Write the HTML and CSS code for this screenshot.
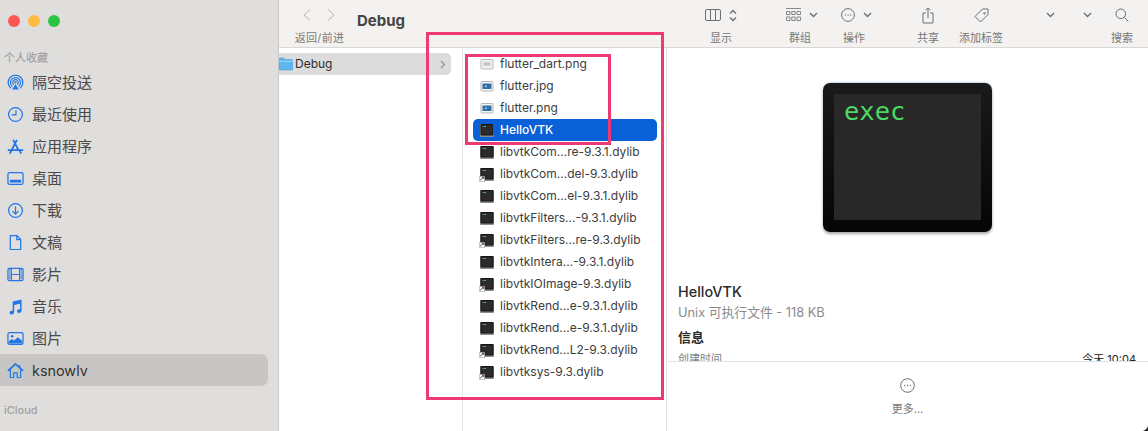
FILE: index.html
```html
<!DOCTYPE html>
<html lang="zh-CN">
<head>
<meta charset="utf-8">
<title>Debug</title>
<link rel="stylesheet" href="styles.css">
</head>
<body>
<svg class="defs" width="0" height="0" aria-hidden="true">
  <symbol id="term" viewBox="0 0 14 13">
    <rect x="0" y="0" width="14" height="13" rx="1" fill="#8d8d8d"/>
    <rect x="0.5" y="0" width="13" height="11.5" rx="1" fill="#161616"/>
    <rect x="1.5" y="1" width="11" height="9.5" fill="#2b2b2b"/>
    <path d="M2.5 2.5h3.5" stroke="#5fd47a" stroke-width="0.9" stroke-dasharray="1 .3"/>
  </symbol>
  <symbol id="alias" viewBox="0 0 6 6">
    <rect x="0.3" y="0.3" width="5.4" height="5.4" rx="0.8" fill="#fff" stroke="#777" stroke-width=".5"/>
    <path d="M1.7 4.4 C1.7 3 2.6 2.2 4.3 2.2M3 1.2h1.5v1.5" fill="none" stroke="#222" stroke-width=".8"/>
  </symbol>
</svg>
<div class="window">
  <aside class="sidebar">
    <div class="lights"><span class="light red"></span><span class="light yellow"></span><span class="light green"></span></div>
    <div class="sec-title">个人收藏</div>
    <div class="side-row"><svg class="si" viewBox="0 0 18 18"><path d="M4.300 15.200A7.800 7.800 0 1 1 13.700 15.200"/><path d="M5.700 13.200A5.300 5.300 0 1 1 12.300 13.200"/><path d="M7.200 11.200A2.900 2.900 0 1 1 10.800 11.200"/><circle class="fill" cx="9" cy="8.800" r="1.200"/><path class="fill" d="M9 10.500l3.500 6h-7z"/></svg><span>隔空投送</span></div>
    <div class="side-row"><svg class="si" viewBox="0 0 18 18"><circle cx="9" cy="9" r="7.300"/><path d="M9.500 4.500v5H5"/></svg><span>最近使用</span></div>
    <div class="side-row"><svg class="si" viewBox="0 0 18 18"><path class="thick" d="M6.500 2l6 11.500M10.500 2L4.500 13.500M.8 12.800h16.400M3 16.500l1.500-3M15 16.500l-1.500-3"/></svg><span>应用程序</span></div>
    <div class="side-row"><svg class="si" viewBox="0 0 18 18"><rect x="1" y="2.800" width="16" height="12.400" rx="1.600"/><rect class="fill" x="3" y="10.300" width="12" height="3" rx=".4"/></svg><span>桌面</span></div>
    <div class="side-row"><svg class="si" viewBox="0 0 18 18"><circle cx="9" cy="9" r="7.300"/><path d="M9 4.800v8M5.800 9.600L9 12.800l3.200-3.200"/></svg><span>下载</span></div>
    <div class="side-row"><svg class="si" viewBox="0 0 18 18"><path d="M3.500 1.600h7l4 4.200v10.600h-11zM10.300 1.800v4.200h4.200"/></svg><span>文稿</span></div>
    <div class="side-row"><svg class="si" viewBox="0 0 18 18"><rect x="1" y="2.600" width="16" height="12.800" rx="1.400"/><path d="M4.600 2.600v12.800M13.400 2.600v12.800M4.600 9h8.800"/><path class="dash" d="M2.800 3.500v11M15.200 3.500v11"/></svg><span>影片</span></div>
    <div class="side-row"><svg class="si" viewBox="0 0 18 18"><path class="fill" d="M6 3.600L15.400 1.600v11.600c0 1.600-1.300 2.600-2.800 2.600-1.200 0-2-.7-2-1.700 0-1.200 1-2 2.300-2.100l.9-.1V6.200L7.600 7.400v7.500c0 1.500-1.300 2.500-2.800 2.500-1.200 0-2-.7-2-1.700 0-1.200 1-2 2.300-2.100L6 13.400z"/></svg><span>音乐</span></div>
    <div class="side-row"><svg class="si" viewBox="0 0 18 18"><rect x="1" y="2.800" width="16" height="12.400" rx="1.600"/><circle class="fill" cx="5.400" cy="6.600" r="1.400"/><path class="fill" d="M2 14.200v-2.400l3-2.200 2.600 1.600 3.800-3.600 4.600 3.800v2.800z"/></svg><span>图片</span></div>
    <div class="side-row active"><svg class="si" viewBox="0 0 18 18"><path class="thick" d="M1 9.400L9 2l8 7.400"/><path d="M3.600 7.400v9h3.600v-5h3.600v5h3.600v-9M13.400 3.200v2.400"/></svg><span class="latin">ksnowlv</span></div>
    <div class="sec-title cloud">iCloud</div>
  </aside>
  <main class="main">
    <header class="toolbar">
      <div class="nav">
        <div class="nav-arrows">
          <svg class="ti" width="12" height="14" viewBox="0 0 12 14"><path class="faint" d="M9 1.500L3 7l6 5.500"/></svg>
          <svg class="ti" width="12" height="14" viewBox="0 0 12 14"><path class="faint" d="M3 1.500L9 7l-6 5.500"/></svg>
        </div>
        <span class="label wide">返回/前进</span>
      </div>
      <div class="title">Debug</div>
      <div class="tools">
        <div class="tool t-view">
          <div class="tool-icon">
            <svg class="ti" width="16" height="12" viewBox="0 0 16 12"><rect x=".5" y=".5" width="15" height="11" rx="1.500"/><path d="M5.500.5v11M10.500.5v11"/></svg>
            <svg class="ti chev-ud" width="8" height="13" viewBox="0 0 8 13"><path class="bold" d="M1 4.500L4 1.500l3 3M1 8.500l3 3 3-3"/></svg>
          </div>
          <span class="label">显示</span>
        </div>
        <div class="tool t-group">
          <div class="tool-icon shifted">
            <svg class="ti" width="15" height="14" viewBox="0 0 15 14"><path d="M0 .5h15M.5 3.500h3.500v3h-3.500zM5.800 3.500h3.400v3h-3.400zM11 3.500h3.500v3h-3.500zM.5 9h3.500v3.500h-3.500zM5.800 9h3.400v3.500h-3.400zM11 9h3.500v3.500h-3.500z" stroke-width=".8"/></svg>
            <svg class="ti chev" width="9" height="6" viewBox="0 0 9 6"><path class="bold" d="M1 1l3.500 3.500L8 1"/></svg>
          </div>
          <span class="label">群组</span>
        </div>
        <div class="tool t-action">
          <div class="tool-icon shifted">
            <svg class="ti" width="14" height="14" viewBox="0 0 14 14"><circle cx="7" cy="7" r="6.400"/><path class="bold dots" d="M3.800 7h.9M6.600 7h.9M9.300 7h.9"/></svg>
            <svg class="ti chev" width="9" height="6" viewBox="0 0 9 6"><path class="bold" d="M1 1l3.500 3.500L8 1"/></svg>
          </div>
          <span class="label">操作</span>
        </div>
        <div class="tool t-share">
          <div class="tool-icon">
            <svg class="ti" width="12" height="17" viewBox="0 0 12 17"><path d="M3.800 6H1v10h10V6H8.200M6 11V1M3.500 3.300L6 .9l2.500 2.400"/></svg>
          </div>
          <span class="label">共享</span>
        </div>
        <div class="tool t-tag">
          <div class="tool-icon">
            <svg class="ti" width="15" height="15" viewBox="0 0 15 15"><path d="M8.500 1h5.500v5.500L6.500 14 1 8.500zM10.500 4.500a.8.8 0 1 0 .01 0"/></svg>
          </div>
          <span class="label">添加标签</span>
        </div>
        <div class="tool t-more">
          <div class="tool-icon"><svg class="ti chev" width="9" height="6" viewBox="0 0 9 6"><path class="bold" d="M1 1l3.500 3.500L8 1"/></svg></div>
        </div>
        <div class="tool t-more2">
          <div class="tool-icon"><svg class="ti chev" width="9" height="6" viewBox="0 0 9 6"><path class="bold" d="M1 1l3.500 3.500L8 1"/></svg></div>
        </div>
        <div class="tool t-search">
          <div class="tool-icon">
            <svg class="ti" width="14" height="14" viewBox="0 0 14 14"><circle cx="5.800" cy="5.800" r="4.800"/><path d="M9.300 9.300l4 4"/></svg>
          </div>
          <span class="label">搜索</span>
        </div>
      </div>
    </header>
    <div class="content">
      <section class="col col-folder">
        <div class="folder-row">
          <svg class="folder" width="14" height="14" viewBox="0 0 14 14"><path d="M0 2.500C0 1.600.6 1 1.500 1h3.300l1.400 1.500h6.300c.9 0 1.500.6 1.500 1.500v7.500c0 .9-.6 1.500-1.500 1.500h-11C.6 13 0 12.400 0 11.500z" fill="#5eb6ee" stroke="#3c95d6" stroke-width=".5"/><path d="M0 4.400h14" stroke="#a8dcfa" stroke-width=".8"/></svg>
          <span class="folder-name">Debug</span>
          <svg class="row-chev" width="6" height="9" viewBox="0 0 6 9"><path d="M1 1l3.500 3.500L1 8" fill="none" stroke="#8f8f8f" stroke-width="1.200"/></svg>
        </div>
      </section>
      <section class="col col-files">
        <div class="file"><svg class="fi" viewBox="0 0 14 11"><rect x="1" y=".5" width="12" height="9.500" rx="1" fill="#f6f6f6" stroke="#b5b5b5"/><rect x="3" y="2.500" width="8" height="5" fill="#d6d8db"/><rect x="4.500" y="4.500" width="5" height="1" fill="#a5a9ad"/></svg><span>flutter_dart.png</span></div>
        <div class="file"><svg class="fi" viewBox="0 0 14 11"><rect x="1" y=".5" width="12" height="9.500" rx="1" fill="#f6f6f6" stroke="#b5b5b5"/><rect x="2.500" y="2.500" width="9" height="5.500" fill="#2f6ea8"/><path d="M4.500 5.200L6.500 4v2.500z" fill="#cfe6f7"/></svg><span>flutter.jpg</span></div>
        <div class="file"><svg class="fi" viewBox="0 0 14 11"><rect x="1" y=".5" width="12" height="9.500" rx="1" fill="#f6f6f6" stroke="#b5b5b5"/><rect x="2.500" y="2.500" width="9" height="5.500" fill="#2f6ea8"/><path d="M4.500 5.200L6.500 4v2.500z" fill="#cfe6f7"/></svg><span>flutter.png</span></div>
        <div class="file selected"><svg class="ft"><use href="#term"/></svg><span>HelloVTK</span></div>
        <div class="file"><svg class="ft"><use href="#term"/></svg><span>libvtkCom...re-9.3.1.dylib</span></div>
        <div class="file"><span class="fw"><svg class="ft"><use href="#term"/></svg><svg class="al"><use href="#alias"/></svg></span><span>libvtkCom...del-9.3.dylib</span></div>
        <div class="file"><svg class="ft"><use href="#term"/></svg><span>libvtkCom...el-9.3.1.dylib</span></div>
        <div class="file"><svg class="ft"><use href="#term"/></svg><span>libvtkFilters...-9.3.1.dylib</span></div>
        <div class="file"><span class="fw"><svg class="ft"><use href="#term"/></svg><svg class="al"><use href="#alias"/></svg></span><span>libvtkFilters...re-9.3.dylib</span></div>
        <div class="file"><svg class="ft"><use href="#term"/></svg><span>libvtkIntera...-9.3.1.dylib</span></div>
        <div class="file"><span class="fw"><svg class="ft"><use href="#term"/></svg><svg class="al"><use href="#alias"/></svg></span><span>libvtkIOImage-9.3.dylib</span></div>
        <div class="file"><svg class="ft"><use href="#term"/></svg><span>libvtkRend...e-9.3.1.dylib</span></div>
        <div class="file"><svg class="ft"><use href="#term"/></svg><span>libvtkRend...e-9.3.1.dylib</span></div>
        <div class="file"><span class="fw"><svg class="ft"><use href="#term"/></svg><svg class="al"><use href="#alias"/></svg></span><span>libvtkRend...L2-9.3.dylib</span></div>
        <div class="file"><span class="fw"><svg class="ft"><use href="#term"/></svg><svg class="al"><use href="#alias"/></svg></span><span>libvtksys-9.3.dylib</span></div>
      </section>
      <section class="preview">
        <div class="preview-body">
          <div class="big-icon"><div class="screen"><span class="exec">exec</span></div></div>
          <h1 class="p-name">HelloVTK</h1>
          <div class="p-kind">Unix 可执行文件 - 118 KB</div>
          <h2 class="p-info">信息</h2>
          <div class="p-row"><span class="p-key">创建时间</span><span class="p-val">今天 10:04</span></div>
        </div>
        <div class="preview-more">
          <svg class="ti" width="15" height="15" viewBox="0 0 15 15"><circle cx="7.500" cy="7.500" r="6.800"/><path class="bold dots" d="M4.200 7.500h1M7 7.500h1M9.800 7.500h1"/></svg>
          <span class="label">更多...</span>
        </div>
      </section>
    </div>
  </main>
  <div class="mark mark-outer"></div>
  <div class="mark mark-inner"></div>
</div>
</body>
</html>
```

FILE: styles.css
```css
* { box-sizing: border-box; }
html, body { margin: 0; padding: 0; height: 100%; background: #2a2a2a; }
body { font-family: Inter, "Liberation Sans", "Noto Sans CJK SC", sans-serif; overflow: hidden; }
.defs { position: absolute; }
.window { position: relative; display: flex; width: 1148px; height: 431px; overflow: hidden; background: #fff; border-bottom-right-radius: 7px; }

/* sidebar */
.sidebar { width: 279px; flex: none; background: #e0dedd; border-right: 1px solid #c9c8c7; display: flex; flex-direction: column; padding-right: 10px; }
.lights { display: flex; gap: 8px; padding: 15px 0 0 8px; height: 50px; flex: none; }
.light { width: 12px; height: 12px; border-radius: 50%; }
.red { background: #fc5753; }
.yellow { background: #fdbc40; }
.green { background: #2bc641; }
.sec-title { font-size: 11px; line-height: 16px; color: #a3a1a0; padding-left: 4px; font-weight: 500; }
.cloud { margin-top: 16px; }
.side-row { display: flex; align-items: center; height: 32px; padding-left: 7px; font-size: 15px; color: #4a4a4a; border-radius: 0 7px 7px 0; flex: none; }
.side-row span { margin-left: 8px; padding-bottom: 2px; }
.side-row span.latin { font-size: 14.400px; padding-bottom: 0; }
.side-row.active { background: #c8c6c5; color: #333; }
.si { width: 17px; height: 17px; flex: none; fill: none; stroke: #2277e4; stroke-width: 1.300; }
.si .fill { fill: #2277e4; stroke: none; }
.si .thick { stroke-width: 1.900; }
.si .dash { stroke-width: 1.400; stroke-dasharray: 1.200 1; }

/* main */
.main { flex: 1; min-width: 0; display: flex; flex-direction: column; }
.toolbar { height: 48px; flex: none; display: flex; background: #f4f2f1; border-bottom: 1px solid #d9d8d7; padding-left: 15px; }
.nav { width: 51px; display: flex; flex-direction: column; align-items: center; }
.nav-arrows { display: flex; gap: 12px; height: 30px; padding-top: 8px; margin-right: 1px; }
.title { margin-left: 12px; font-size: 15px; font-weight: 700; color: #444; line-height: 42px; }
.label { font-size: 11px; line-height: 14px; color: #777; white-space: nowrap; margin-top: 1px; }
.label.wide { letter-spacing: .35px; }
.tools { margin-left: auto; display: flex; padding-right: 6px; }
.tool { display: flex; flex-direction: column; align-items: center; }
.tool-icon { height: 30px; display: flex; align-items: center; gap: 8px; }
.tool-icon.shifted { padding-left: 4px; }
.ti { fill: none; stroke: #6f6f6f; stroke-width: 1; flex: none; }
.ti .faint { stroke: #b8b7b6; }
.ti .bold { stroke-width: 1.400; }
.t-view { width: 60px; }
.t-group { width: 50px; margin-left: 24px; }
.t-action { width: 50px; margin-left: 4px; }
.t-share { width: 50px; margin-left: 24px; }
.t-tag { width: 56px; }
.t-more { width: 30px; margin-left: 26px; }
.t-more2 { width: 30px; margin-left: 7px; }
.t-search { width: 40px; }

/* columns */
.content { flex: 1; display: flex; min-height: 0; }
.col { flex: none; background: #fff; border-right: 1px solid #e4e4e4; padding-top: 5px; }
.col-folder { width: 184px; }
.folder-row { display: flex; align-items: center; height: 22px; width: 172px; background: #dcdcdc; border-radius: 0 5px 5px 0; }
.folder { flex: none; }
.folder-name { margin-left: 2px; font-size: 12px; color: #2e2e2e; padding-bottom: 2px; }
.row-chev { margin-left: auto; margin-right: 5px; }
.col-files { width: 204px; padding-left: 10px; padding-right: 9px; }
.file { display: flex; align-items: center; height: 22px; padding-left: 7px; font-size: 12px; color: #3c3c3c; border-radius: 5px; }
.file span:last-child { margin-left: 6px; padding-bottom: 2px; }
.file.selected { background: #0a60d6; color: #fff; font-weight: 500; }
.fi { width: 14px; height: 11px; flex: none; }
.ft { width: 14px; height: 13px; flex: none; display: block; }
.fw { position: relative; flex: none; width: 14px; height: 13px; }
.al { position: absolute; left: -1px; bottom: -1px; width: 6px; height: 6px; }

/* preview */
.preview { flex: 1; min-width: 0; display: flex; flex-direction: column; background: #fff; }
.preview-body { height: 314px; flex: none; overflow: hidden; padding: 35px 12px 0 11px; border-bottom: 1px solid #e4e4e4; }
.big-icon { width: 169px; height: 149px; margin-left: 145px; background: linear-gradient(#1a1a1a, #050505); border-radius: 7px; padding: 11px; box-shadow: 0 2px 3px rgba(0,0,0,.35), 0 -1px 1px rgba(120,170,210,.4); }
.screen { width: 147px; height: 126px; background: #282828; padding: 1px 10px; }
.exec { font-family: "DejaVu Sans Mono", monospace; font-size: 25.500px; line-height: 32px; color: #4fd765; }
.p-name { margin: 50px 0 0; font-size: 14.400px; line-height: 20px; font-weight: 500; color: #2a2a2a; }
.p-kind { margin-top: 2px; font-size: 12.800px; line-height: 18px; color: #8a8a8a; }
.p-info { margin: 6px 0 0; font-size: 13px; line-height: 18px; font-weight: 700; color: #2a2a2a; }
.p-row { display: flex; justify-content: space-between; font-size: 11px; line-height: 16px; margin-top: 5px; }
.p-key { color: #808080; }
.p-val { color: #222; }
.preview-more { flex: 1; display: flex; flex-direction: column; align-items: center; padding-top: 16px; gap: 8px; }

/* annotation overlays */
.mark { position: absolute; border: 3px solid #ee3a72; pointer-events: none; }
.mark-outer { left: 426px; top: 32px; width: 238px; height: 368px; }
.mark-inner { left: 465px; top: 54px; width: 146px; height: 91px; }
```
